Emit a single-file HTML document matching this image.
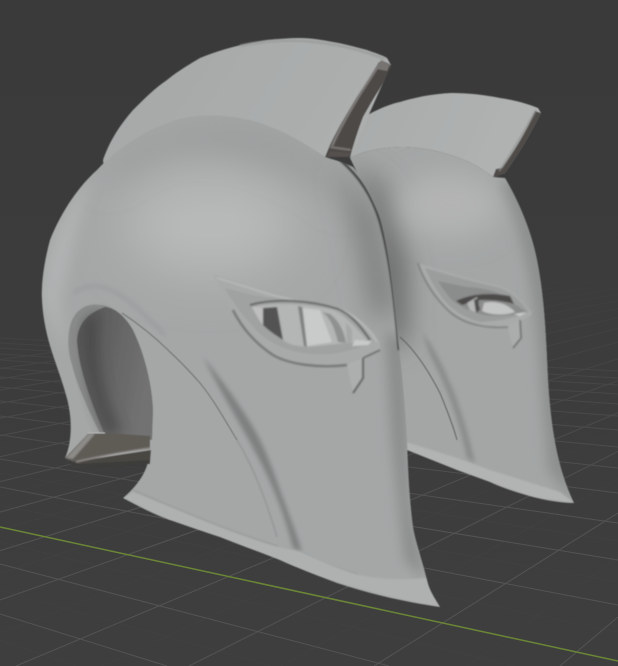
<!DOCTYPE html>
<html lang="en"><head><meta charset="utf-8"><title>Helmet render</title>
<style>html,body{margin:0;padding:0;width:618px;height:666px;background:#3c3c3c;overflow:hidden}svg{display:block;overflow:hidden}</style></head>
<body>
<svg xmlns="http://www.w3.org/2000/svg" width="618" height="666" viewBox="0 0 618 666">
<defs>
<linearGradient id="bg" x1="0" y1="0" x2="0" y2="1"><stop offset="0" stop-color="#3a3a3a"/><stop offset="1" stop-color="#3e3e3e"/></linearGradient>
<linearGradient id="fade" gradientUnits="userSpaceOnUse" x1="0" y1="260" x2="0" y2="520"><stop offset="0" stop-color="#000"/><stop offset="0.3" stop-color="#444"/><stop offset="1" stop-color="#fff"/></linearGradient>
<mask id="gm" maskUnits="userSpaceOnUse" x="0" y="0" width="618" height="666"><rect width="618" height="666" fill="url(#fade)"/></mask>
<filter id="s" x="-2%" y="-2%" width="104%" height="104%"><feGaussianBlur stdDeviation="0.45"/></filter>
<filter id="b2" x="-30%" y="-30%" width="160%" height="160%"><feGaussianBlur stdDeviation="2"/></filter>
<filter id="b1" x="-30%" y="-30%" width="160%" height="160%"><feGaussianBlur stdDeviation="0.7"/></filter>
<filter id="b6" x="-50%" y="-50%" width="200%" height="200%"><feGaussianBlur stdDeviation="6"/></filter>
<filter id="b14" x="-60%" y="-60%" width="220%" height="220%"><feGaussianBlur stdDeviation="14"/></filter>
<filter id="b25" x="-80%" y="-80%" width="260%" height="260%"><feGaussianBlur stdDeviation="25"/></filter>
<linearGradient id="crest" x1="0" y1="0" x2="1" y2="0.3"><stop offset="0" stop-color="#a6a8a8"/><stop offset="1" stop-color="#adafaf"/></linearGradient>
<linearGradient id="crest2" x1="0" y1="0" x2="1" y2="0.2"><stop offset="0" stop-color="#a9abab"/><stop offset="1" stop-color="#b1b3b3"/></linearGradient>
<linearGradient id="inner" x1="0" y1="0" x2="1" y2="0.3"><stop offset="0" stop-color="#555"/><stop offset="1" stop-color="#727272"/></linearGradient>
<clipPath id="fb"><path d="M325 157C305 143 280 128 250 120C220 113 190 114 170 122C145 130 115 150 97 170C80 185 62 210 50 240C44 262 41 285 42 300C44 340 58 365 66 395C72 415 73 440 65 458L72 467L148 462C145 475 135 488 123 498C140 507 155 515 170 520C190 527 205 532 220 537C240 545 260 552 280 560C300 569 318 576 337 583C370 594 405 602 440 607C434 597 429 590 427 580C420 553 415 540 413 527C409 495 408 470 407 440C405 405 402 370 398 340C394 300 390 255 380 217C372 198 362 178 353 167C345 163 335 160 325 157Z"/></clipPath>
<clipPath id="bb"><path d="M350 158C365 150 385 147 405 147C430 148 465 155 493 177L505 178C515 195 530 225 537 260C545 300 546 340 548 380C551 430 558 470 574 503C560 503 545 500 533 497C515 492 500 487 490 482L457 470L407 450L390 445L380 220Z"/></clipPath>
</defs>

<rect width="618" height="666" fill="url(#bg)"/>

<g mask="url(#gm)" stroke="#545454" stroke-width="1" fill="none">
<path d="M0 614L167 666M0 564L389 666M0 487L618 605M0 459L618 560M0 435L618 523M0 416L618 493M0 401L618 468M0 387L618 447M0 377L618 430M0 368L618 416M0 360L618 404M0 354L618 394M0 348L618 385M0 343L618 378M0 338L618 371"/>
<path d="M560 666L618 617M374 666L618 513M189 666L618 451.5M16 666L618 412.8M0 600L618 380.8M0 550.7L618 359M0 512L618 342M0 481.7L618 328.6M0 456.7L618 317.6M0 435.8L618 308.4M0 418.3L618 300.7M0 403.2L618 294M0 390.1L618 288.3M0 378.7L618 283.2M0 368.6L618 278.8M0 359.6L618 274.8"/>
</g>
<g mask="url(#gm)" stroke="#464646" stroke-width="0.6" fill="none" opacity="0.6">
<path d="M0 542L514 666M0 505L618 632M0 590L271 666M0 640L76 666M0 473L618 582M0 447L618 541M467 666L618 557.6M281 666L618 478.7M102 666L618 430.4M0 633.3L618 395.4M0 573.6L618 369.2M0 530L618 350M0 496L618 335"/>
</g>
<path d="M0 527L618 661" stroke="#6b8636" stroke-width="1.5" fill="none"/>

<g filter="url(#s)">
<!-- BACK HELMET -->
<path d="M350 158L363 118C375 110 390 104 400 102C420 96 435 94 450 93C470 93 485 95 500 98C515 100 528 104 538 108L541 113C530 135 518 155 505 173L493 177C465 155 430 148 405 147C385 147 365 150 350 158Z" fill="url(#crest2)"/>
<path d="M535 111L541 113C530 135 518 155 505 173L493 177L496 169L502 168C515 150 527 130 535 111Z" fill="#4f4c49"/>
<path d="M536 110C525 130 512 153 499 171" stroke="#8f8f8f" stroke-width="1.4" fill="none" filter="url(#b1)"/>
<path d="M350 158C365 150 385 147 405 147C430 148 465 155 493 177L505 178C515 195 530 225 537 260C545 300 546 340 548 380C551 430 558 470 574 503C560 503 545 500 533 497C515 492 500 487 490 482L457 470L407 450L390 445L380 220Z" fill="#a4a6a6"/>
<g clip-path="url(#bb)">
<path d="M345 160L385 190L405 270L405 340L385 350L370 200Z" fill="#5f6060" filter="url(#b14)"/>
<ellipse cx="450" cy="205" rx="50" ry="32" fill="#b3b4b4" filter="url(#b14)"/>
<path d="M500 180C520 225 535 290 540 370L548 470L574 503L565 380L555 260L525 180Z" fill="#8d8f8f" filter="url(#b6)"/>
<path d="M423 333C437 352 447 375 455 395C463 417 470 440 475 463L467 458C460 425 450 395 435 365C428 352 425 342 423 333Z" fill="#8a8c8c" filter="url(#b2)"/>
<path d="M400 337C415 350 428 370 440 393C447 410 453 425 457 440" stroke="#565757" stroke-width="1" fill="none"/>
<path d="M406 442L457 458L490 470L560 492L574 503L533 497L490 482L457 470L407 450Z" fill="#b2b3b3" filter="url(#b1)"/>
</g>
<!-- back eye -->
<g filter="url(#b1)">
<path d="M418 263L467 278L500 286C512 290 524 302 532 313C528 318 525 319 520 320L521 338L513 348L508 327C495 329 485 329 477 327C462 322 450 313 442 303C433 290 425 278 418 263Z" fill="#a9abab"/>
<path d="M425 268L467 280L500 288C512 292 522 303 529 312C515 318 500 321 480 322C465 318 452 310 444 300C436 290 430 280 425 268Z" fill="#9b9d9d"/>
<path d="M438 281L467 287C485 288 500 291 513 303L527 312C515 315 505 316 495 316C480 316 465 310 453 301C447 295 442 288 438 281Z" fill="#8b8c8c"/>
<path d="M456 301C470 294 490 292 510 296L514 304C500 300 490 300 480 300L462 305Z" fill="#4e4b4a"/>
<path d="M484 303C495 300 508 304 515 312C505 316 490 315 482 311Z" fill="#c4c5c5"/>
<path d="M467 303L477 297L480 306L476 313L470 310Z" fill="#b5b6b6"/>
<path d="M474 300L478 298L480 310L476 313Z" fill="#505050"/>
<path d="M521 313L527 312L520 316L514 314Z" fill="#cfcfcf"/>
<path d="M508 327L520 320L521 338L513 348Z" fill="#abadad"/>
<path d="M520 320L521 338L513 348" stroke="#606161" stroke-width="1.4" fill="none"/>
<path d="M418 263C424 282 435 298 450 312C462 322 480 329 508 327" stroke="#7f8080" stroke-width="1.8" fill="none"/>
</g>

<!-- FRONT CREST -->
<path d="M104 170L103 160C110 140 120 125 133 110C145 98 155 88 167 80C178 71 190 64 200 58C212 53 222 50 233 47C245 44 255 42 267 40C280 39 290 38 300 38C312 38 322 40 333 42C345 44 355 47 367 50C375 53 382 55 387 58L391 65L350 157L325 157L250 135Z" fill="url(#crest)"/>
<path d="M240 46C280 37 330 38 385 59" stroke="#9c9e9e" stroke-width="2.4" fill="none" filter="url(#b1)"/>
<path d="M379 62L391 65C385 80 381 87 377 93C372 101 367 110 363 117C358 130 354 143 350 157L325 157L330 145C338 128 348 112 357 97C365 85 372 74 379 62Z" fill="#4d4946"/>
<path d="M380 63C371 78 362 90 356 101C347 116 339 130 332 146" stroke="#8a8886" stroke-width="2" fill="none" filter="url(#b1)"/>
<path d="M381 60L390 64L387 71L377 69Z" fill="#767371"/>
<path d="M330 147L351 150" stroke="#8b8987" stroke-width="1.5" fill="none" filter="url(#b1)"/>
<path d="M327 157L330 151L350 153L349 157Z" fill="#54504d"/>

<!-- FRONT BODY -->
<path d="M325 157C305 143 280 128 250 120C220 113 190 114 170 122C145 130 115 150 97 170C80 185 62 210 50 240C44 262 41 285 42 300C44 340 58 365 66 395C72 415 73 440 65 458L72 467L148 462C145 475 135 488 123 498C140 507 155 515 170 520C190 527 205 532 220 537C240 545 260 552 280 560C300 569 318 576 337 583C370 594 405 602 440 607C434 597 429 590 427 580C420 553 415 540 413 527C409 495 408 470 407 440C405 405 402 370 398 340C394 300 390 255 380 217C372 198 362 178 353 167C345 163 335 160 325 157Z" fill="#a5a7a7"/>
<g clip-path="url(#fb)">
<ellipse cx="210" cy="225" rx="85" ry="50" fill="#b8b9b9" filter="url(#b25)"/>
<path d="M110 160C150 130 200 118 250 125C285 132 310 145 330 160L350 180L345 210C300 170 240 145 180 150C150 155 125 170 105 190Z" fill="#9c9e9e" filter="url(#b14)"/>
<path d="M340 165L375 215L395 310L375 320L360 240Z" fill="#727373" filter="url(#b14)"/>
<path d="M42 300C44 255 62 210 90 178L75 240L60 300L65 350Z" fill="#b0b2b2" filter="url(#b6)"/>
<path d="M385 330L405 340L410 500L425 580L405 560L392 440Z" fill="#8a8c8c" filter="url(#b6)"/>
<path d="M340 160C358 175 372 195 380 222C391 262 395 305 399 350" stroke="#3e3e3e" stroke-width="2.4" fill="none" filter="url(#b1)"/>
<path d="M73 293C85 285 100 283 115 292C130 300 145 315 165 335" stroke="#9a9c9c" stroke-width="3" fill="none" filter="url(#b2)"/>
<path d="M203 357C222 380 240 405 253 427C265 447 273 470 280 490C288 512 296 532 302 552L293 548C286 520 275 490 262 465C248 437 225 400 203 357Z" fill="#7f8181" filter="url(#b2)"/>
<path d="M122 313C140 325 156 338 170 352C182 363 192 374 200 383C214 400 226 422 237 440" stroke="#606161" stroke-width="0.9" fill="none"/>
<path d="M237 440C246 455 254 472 260 487C267 505 272 520 277 537" stroke="#8b8d8d" stroke-width="1" fill="none" filter="url(#b1)"/>
<path d="M123 498C170 522 230 546 280 562C330 582 385 597 440 607L427 578C400 580 375 580 353 573C335 566 318 558 302 552L278 547C230 532 180 510 133 492Z" fill="#afb1b1" filter="url(#b1)"/>
<path d="M133 490C180 510 230 532 278 546" stroke="#959797" stroke-width="1.1" fill="none" filter="url(#b1)"/>
<path d="M302 552C320 560 340 569 358 574" stroke="#9a9c9c" stroke-width="1" fill="none" filter="url(#b1)"/>
</g>
<!-- arch -->
<path d="M100 305C88 303 78 308 72 320C67 332 67 350 72 365C77 385 88 410 100 433L152 440L153 410C152 385 145 355 133 330C125 316 113 305 100 305Z" fill="#8a8b8b"/>
<path d="M105 307C90 312 78 322 77 340C78 365 90 400 104 433L152 440L153 410C152 385 145 355 133 330C125 316 115 308 105 307Z" fill="url(#inner)"/>
<path d="M85 320C80 355 92 405 106 433L122 433C105 400 92 360 100 312Z" fill="#454545" filter="url(#b6)" opacity="0.75"/>
<path d="M65 458L89 433L105 433L150 436L150 449C120 452 90 458 72 467Z" fill="#5f5b57"/>
<path d="M66 458L89 433L95 434L73 459Z" fill="#8d8b88" filter="url(#b1)"/>
<path d="M72 462L151 450L150 463L80 467Z" fill="#4a4643"/>
<path d="M76 462C100 456 125 452 151 448" stroke="#a7a5a3" stroke-width="1.3" fill="none" filter="url(#b1)"/>
<path d="M65 458L72 467L150 464L150 460L78 464Z" fill="#3e3c3a"/>
<path d="M88 433L105 433" stroke="#bcbdbd" stroke-width="1" fill="none"/>

<!-- front eye -->
<g filter="url(#b1)">
<path d="M213 274L250 286C275 295 300 300 333 305C350 309 370 325 380 343L380 350L363 358L363 378L353 393L347 365C335 367 325 367 317 365C300 365 285 362 273 355C255 343 242 328 233 310C225 298 218 285 213 274Z" fill="#a8aaaa"/>
<path d="M217 278L250 288C275 297 300 302 333 307C350 311 368 326 377 342" stroke="#bbbcbc" stroke-width="1.4" fill="none"/>
<path d="M225 288L253 295L300 302C325 305 345 313 360 325L374 342C350 352 330 356 310 354C290 352 272 345 258 332C243 316 232 302 225 288Z" fill="#a0a2a2"/>
<path d="M252 307C270 303 300 302 333 310C345 315 356 328 367 340C355 343 345 343 347 343L307 347C295 346 288 344 283 340C273 335 262 325 252 307Z" fill="#b4b5b5"/>
<path d="M263 308L277 307L283 340C275 335 268 330 263 325Z" fill="#525252"/>
<path d="M252 307C256 315 259 320 263 325L263 308Z" fill="#bdbebe"/>
<path d="M298 306L302 307L307 347L304 346Z" fill="#7e7f7f"/>
<path d="M303 308L320 310L332 342L307 346Z" fill="#c9caca"/>
<path d="M322 312C331 318 335 330 338 342L346 343C344 330 338 320 330 314Z" fill="#8f9090"/>
<path d="M346 322L352 330L352 342L347 343Z" fill="#a6a7a7"/>
<path d="M250 305C275 298 310 300 338 309C352 315 362 328 370 340" stroke="#626363" stroke-width="2" fill="none"/>
<path d="M355 340L372 341L368 345L352 346Z" fill="#c9caca"/>
<path d="M347 365L363 358L363 378L353 393Z" fill="#adafaf"/>
<path d="M363 358L363 378L353 393" stroke="#565757" stroke-width="1.8" fill="none"/>
<path d="M380 350L363 358" stroke="#666767" stroke-width="1.6" fill="none"/>
<path d="M233 310C242 328 255 343 273 355C290 365 320 368 347 365" stroke="#757676" stroke-width="2.4" fill="none"/>
</g>
</g>
</svg>
</body></html>
